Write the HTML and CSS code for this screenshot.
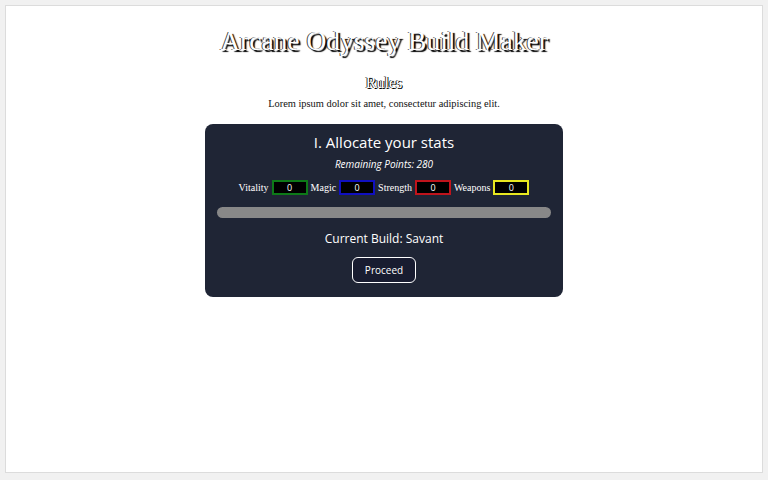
FILE: index.html
```html
<!DOCTYPE html>
<html lang="en">
<head>
    <meta charset="UTF-8">
    <meta name="viewport" content="width=device-width, initial-scale=1.0">
    <title>Arcane Odyssey Build Maker</title>
    <link rel="stylesheet" href="styles.css">
</head>
<body>
    <div class="page">
        <h1 class="title">Arcane Odyssey Build Maker</h1>
        <h3 class="rules-title">Rules</h3>
        <p class="rules-text">Lorem ipsum dolor sit amet, consectetur adipiscing elit.</p>

        <div class="card" id="stats-box">
            <h2>I. Allocate your stats</h2>
            <p class="remaining">Remaining Points: <span id="points">280</span></p>
            <div class="stat-row">
                <label>Vitality</label>
                <input type="text" class="stat vitality" value="0">
                <label>Magic</label>
                <input type="text" class="stat magic" value="0">
                <label>Strength</label>
                <input type="text" class="stat strength" value="0">
                <label>Weapons</label>
                <input type="text" class="stat weapons" value="0">
            </div>
            <div class="stat-bar"></div>
            <p class="current-build">Current Build: <span id="build">Savant</span></p>
            <button class="proceed">Proceed</button>
        </div>
    </div>
</body>
</html>
```

FILE: styles.css
```css
body {
    margin: 0;
    padding: 5px;
    background: #f1f1f1;
    font-family: "Liberation Serif", serif;
}

.page {
    background: white;
    border: 1px solid #dcdcdc;
    height: 466px;
    text-align: center;
}

.title {
    margin: 19px 0 0 0;
    font-size: 27.5px;
    font-weight: normal;
    color: white;
    text-shadow: 2px 2px 1px black, -1px 0 0 #444;
}

.rules-title {
    margin: 17px 0 0 0;
    font-size: 16px;
    font-weight: normal;
    color: white;
    text-shadow: 1px 1px 0 black, -1px 0 0 #333;
}

.rules-text {
    margin: 6px 0 15px 0;
    font-size: 10.4px;
    color: #111;
}

.card {
    background: #1f2535;
    width: 358px;
    margin: 0 auto;
    border-radius: 8px;
    padding: 8px 0 14px 0;
    color: white;
}

.card h2 {
    margin: 0;
    font-family: "Open Sans", sans-serif;
    font-size: 15px;
    font-weight: normal;
}

.remaining {
    margin: 5px 0 9px 0;
    font-size: 10px;
    font-style: italic;
    font-family: "Open Sans", sans-serif;
}

.stat-row {
    display: flex;
    justify-content: center;
    align-items: center;
    gap: 3px;
    font-size: 10px;
}

.stat {
    width: 32px;
    height: 11px;
    padding: 0;
    background: black;
    color: white;
    border: 2px solid;
    font-size: 9px;
    text-align: center;
    font-family: "Open Sans", sans-serif;
}

.vitality { border-color: #0d7a18; }
.magic { border-color: #1010c0; }
.strength { border-color: #c0141c; }
.weapons { border-color: #e8e820; }

.stat-bar {
    height: 11px;
    margin: 12px 12px 0 12px;
    background: #888888;
    border-radius: 6px;
}

.current-build {
    margin: 12px 0 10px 0;
    font-family: "Open Sans", sans-serif;
    font-size: 12px;
}

.proceed {
    background: #181c30;
    color: white;
    border: 1px solid white;
    border-radius: 6px;
    padding: 5px 12px;
    font-family: "Open Sans", sans-serif;
    font-size: 10px;
    cursor: pointer;
}

.proceed:hover {
    background: #262c44;
}
```
